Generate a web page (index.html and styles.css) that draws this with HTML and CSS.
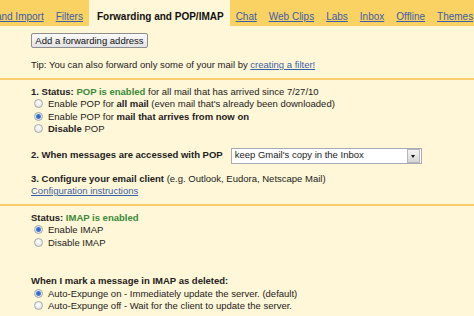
FILE: index.html
```html
<!doctype html>
<html>
<head>
<meta charset="utf-8">
<title>Settings - Forwarding and POP/IMAP</title>
<link rel="stylesheet" href="styles.css">
</head>
<body>
<div class="tabs">
    <a href="#" class="tab first">Accounts and Import</a>
    <a href="#" class="tab">Filters</a>
    <span class="tab on">Forwarding and POP/IMAP</span>
    <a href="#" class="tab">Chat</a>
    <a href="#" class="tab">Web Clips</a>
    <a href="#" class="tab">Labs</a>
    <a href="#" class="tab">Inbox</a>
    <a href="#" class="tab">Offline</a>
    <a href="#" class="tab">Themes</a>
</div>

<div class="sect fwd">
    <button class="btn">Add a forwarding address</button>
    <p class="tip">Tip: You can also forward only some of your mail by <a href="#">creating a filter!</a></p>
</div>

<div class="sect pop">
    <p><b>1. Status: <span class="ok">POP is enabled</span></b> for all mail that has arrived since 7/27/10</p>
    <label class="opt"><input type="radio" name="pop">Enable POP for <b>all mail</b> (even mail that's already been downloaded)</label>
    <label class="opt"><input type="radio" name="pop" checked>Enable POP for <b>mail that arrives from now on</b></label>
    <label class="opt"><input type="radio" name="pop"><b>Disable</b> POP</label>

    <div class="when">
        <b>2. When messages are accessed with POP</b>
        <div class="select">keep Gmail's copy in the Inbox<span class="arrow"></span></div>
    </div>

    <p class="cfg"><b>3. Configure your email client</b> (e.g. Outlook, Eudora, Netscape Mail)</p>
    <p><a href="#">Configuration instructions</a></p>
</div>

<div class="sect imap">
    <p><b>Status: <span class="ok">IMAP is enabled</span></b></p>
    <label class="opt"><input type="radio" name="imap" checked>Enable IMAP</label>
    <label class="opt"><input type="radio" name="imap">Disable IMAP</label>

    <p class="del"><b>When I mark a message in IMAP as deleted:</b></p>
    <label class="opt"><input type="radio" name="exp" checked>Auto-Expunge on - Immediately update the server. (default)</label>
    <label class="opt"><input type="radio" name="exp">Auto-Expunge off - Wait for the client to update the server.</label>
</div>
</body>
</html>
```

FILE: styles.css
```css
body,div,p,a,span,label,input,button{margin:0; padding:0;}
body{
	overflow:hidden;
	font-family:"Liberation Sans", Arial, sans-serif;
	font-size:9.5px;
	line-height:12.5px;
	color:#222;
	background:#fff7d7;
}
a{color:#3b5ea8;}

/* tab strip */
.tabs{
	display:flex;
	height:26px;
	background:#fad163;
	white-space:nowrap;
}
.tab{
	padding:7px 6px 0;
	font-size:10px;
	line-height:19px;
}
.tab.first{margin-left:-54px;}
.tab.on{
	padding:7px 6px 0 8px;
	font-weight:bold;
	color:#111;
	background:#fff7d7;
}

.sect{padding-left:31px;}
.sect p{white-space:nowrap;}
.fwd{
	padding-top:7px;
	padding-bottom:6px;
	border-bottom:2px solid #f6cd6a;
}
.btn{
	display:block;
	width:117px;
	height:15px;
	font-family:inherit;
	font-size:9.5px;
	color:#111;
	border:1px solid #8d8d8d;
	border-radius:2px;
	background:linear-gradient(#fbfbfb,#e3e3e3);
}
.tip{margin-top:11px;}

.pop{
	padding-top:6px;
	padding-bottom:6px;
	border-bottom:2px solid #f6cd6a;
}
.ok{color:#3a8a3a;}

.opt{
	display:block;
	white-space:nowrap;
}
.opt input{
	-webkit-appearance:none;
	appearance:none;
	width:9px;
	height:9px;
	margin:0 5px 0 3px;
	vertical-align:-1px;
	border:1px solid #a5a9ad;
	border-radius:50%;
	background:radial-gradient(circle at 50% 35%,#fff,#dcdcdc);
}
.opt input:checked{
	background:radial-gradient(circle,#2c5cb8 0,#4a7bd0 2px,#dfe6f0 3px,#f4f4f4 5px);
}

.when{
	display:flex;
	align-items:center;
	height:16px;
	margin-top:12px;
}
.select{
	display:flex;
	align-items:center;
	justify-content:space-between;
	width:186px;
	height:14px;
	margin-left:8px;
	padding-left:3px;
	border:1px solid #a5acb5;
	background:#fff;
}
.arrow{
	position:relative;
	width:11px;
	height:12px;
	margin-right:1px;
	border:1px solid #b7b7b7;
	background:linear-gradient(#f3f3f3,#d6d6d6);
}
.arrow:after{
	content:"";
	position:absolute;
	left:3px;
	top:5px;
	border:2.5px solid transparent;
	border-top:3px solid #111;
	border-bottom:none;
}
.cfg{margin-top:9px;}

.imap{padding-top:6px;}
.del{margin-top:26px;}
```
